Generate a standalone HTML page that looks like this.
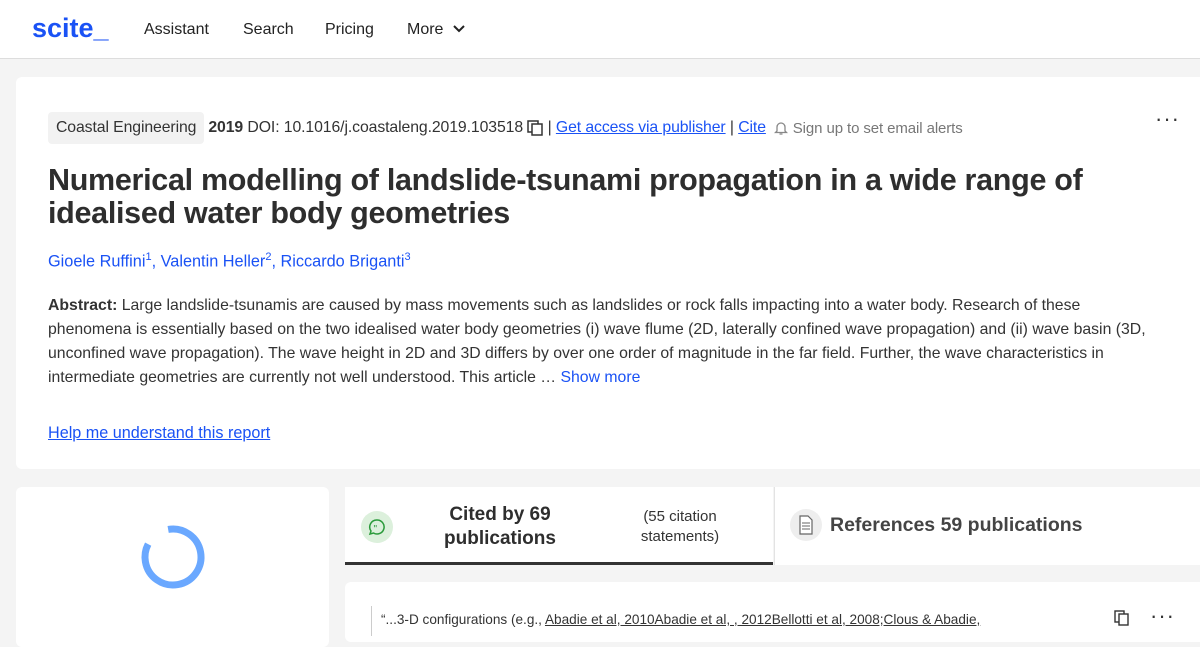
<!DOCTYPE html>
<html><head><style>
*{margin:0;padding:0;box-sizing:border-box}
body{width:1200px;height:630px;overflow:hidden;background:#f4f4f4;font-family:"Liberation Sans",sans-serif;color:#333;position:relative}
.nav{position:absolute;left:0;top:0;width:1200px;height:59px;background:#fff;border-bottom:1px solid #ddd}
.logo{position:absolute;left:32px;top:13px;font-size:27px;font-weight:bold;color:#1a52f5;letter-spacing:0px}
.nl{position:absolute;top:21px;font-size:16px;color:#222}
.card{position:absolute;background:#fff;border-radius:6px}
a{color:#1a52f5}
.meta{position:absolute;left:48px;top:112px;font-size:15.8px;color:#333;display:flex;align-items:center;white-space:nowrap;letter-spacing:-0.1px}
.tag{background:#f2f2f2;border-radius:4px;padding:7px 8px;margin-right:4px}
h1{position:absolute;left:48px;top:164px;width:1120px;font-size:30.5px;line-height:33px;font-weight:bold;color:#2e2e2e;letter-spacing:-0.3px}
.auth{position:absolute;left:48px;top:251px;font-size:16.3px;color:#1a52f5}
.auth sup{font-size:11px}
.abs{position:absolute;left:48px;top:294px;width:1150px;font-size:15.8px;line-height:24px;color:#333;white-space:nowrap}
</style></head><body>
<div class="nav">
<div class="logo">scite_</div>
<div class="nl" style="left:144px">Assistant</div>
<div class="nl" style="left:243px">Search</div>
<div class="nl" style="left:325px">Pricing</div>
<div class="nl" style="left:407px">More <svg width="14" height="10" viewBox="0 0 14 10" style="margin-left:4px"><path d="M2 2l5 5 5-5" stroke="#222" stroke-width="2" fill="none"/></svg></div>
</div>
<div class="card" style="left:16px;top:77px;width:1200px;height:392px">
</div>
<div class="meta"><span class="tag">Coastal Engineering</span><b>2019</b>&nbsp;DOI: 10.1016/j.coastaleng.2019.103518&nbsp;<svg width="16" height="16" viewBox="0 0 16 16"><rect x="1" y="1" width="10" height="11" fill="none" stroke="#333" stroke-width="1.5"/><rect x="5" y="4" width="10" height="11" fill="#fff" stroke="#333" stroke-width="1.5"/></svg>&nbsp;|&nbsp;<a href="#">Get access via publisher</a>&nbsp;|&nbsp;<a href="#">Cite</a>&nbsp;&nbsp;<svg width="14" height="16" viewBox="0 0 14 16"><path d="M3 11V7a4 4 0 018 0v4l1.5 1.5h-11z M5.5 14h3" stroke="#888" fill="none" stroke-width="1.3"/></svg>&nbsp;<span style="color:#777;font-size:15px">Sign up to set email alerts</span></div>
<div style="position:absolute;left:1155px;top:106px;font-size:22px;color:#333;letter-spacing:1px">···</div>
<h1>Numerical modelling of landslide-tsunami propagation in a wide range of idealised water body geometries</h1>
<div class="auth">Gioele Ruffini<sup>1</sup>, Valentin Heller<sup>2</sup>, Riccardo Briganti<sup>3</sup></div>
<div class="abs"><b>Abstract:</b> Large landslide-tsunamis are caused by mass movements such as landslides or rock falls impacting into a water body. Research of these<br>phenomena is essentially based on the two idealised water body geometries (i) wave flume (2D, laterally confined wave propagation) and (ii) wave basin (3D,<br>unconfined wave propagation). The wave height in 2D and 3D differs by over one order of magnitude in the far field. Further, the wave characteristics in<br>intermediate geometries are currently not well understood. This article … <span style="color:#1a52f5">Show more</span></div>
<a href="#" style="position:absolute;left:48px;top:424px;font-size:16.2px">Help me understand this report</a>
<div class="card" style="left:16px;top:487px;width:313px;height:160px"></div>
<svg style="position:absolute;left:139px;top:523px" width="68" height="68" viewBox="0 0 68 68"><circle cx="34" cy="34" r="28" fill="none" stroke="#6aa8ff" stroke-width="7" stroke-dasharray="150 30" transform="rotate(-100 34 34)"/></svg>
<div style="position:absolute;left:345px;top:487px;width:428px;height:78px;background:#fff;border-bottom:3px solid #333"></div>
<div style="position:absolute;left:774px;top:487px;width:440px;height:78px;background:#fff;border-left:1px solid #e3e3e3"></div>
<div style="position:absolute;left:361px;top:511px;width:32px;height:32px;border-radius:50%;background:#dcf0dc"></div>
<svg style="position:absolute;left:367px;top:517px" width="20" height="20" viewBox="0 0 20 20"><path d="M10 3a7 7 0 11-3.5 13L3 17l1-3A7 7 0 0110 3z" fill="none" stroke="#2a9a3a" stroke-width="1.5"/><text x="6.5" y="15" font-size="10" fill="#2a9a3a" font-family="Liberation Sans">"</text></svg>
<div style="position:absolute;left:420px;top:503px;width:160px;text-align:center;font-size:19px;font-weight:bold;line-height:24px;color:#2e2e2e">Cited by 69 publications</div>
<div style="position:absolute;left:620px;top:507px;width:120px;text-align:center;font-size:15px;line-height:20px;color:#333">(55 citation statements)</div>
<div style="position:absolute;left:790px;top:509px;width:32px;height:32px;border-radius:50%;background:#eee"></div>
<svg style="position:absolute;left:798px;top:515px" width="16" height="20" viewBox="0 0 16 20"><path d="M2 1h8l4 4v14H2z" fill="#fff" stroke="#666" stroke-width="1.2"/><path d="M4 8h8M4 11h8M4 14h8" stroke="#666"/></svg>
<div style="position:absolute;left:830px;top:514px;font-size:19.5px;font-weight:bold;color:#444">References 59 publications</div>
<div class="card" style="left:345px;top:582px;width:870px;height:60px"></div>
<div style="position:absolute;left:371px;top:606px;width:1px;height:30px;background:#ccc"></div>
<div style="position:absolute;left:381px;top:612px;font-size:13.6px;color:#333">“...3-D configurations (e.g., <u>Abadie et al, 2010Abadie et al, , 2012Bellotti et al, 2008;Clous &amp; Abadie,</u></div>
<svg style="position:absolute;left:1114px;top:610px" width="16" height="16" viewBox="0 0 16 16"><rect x="1" y="1" width="9" height="11" fill="none" stroke="#333" stroke-width="1.4"/><rect x="5" y="4" width="9" height="11" fill="#fff" stroke="#333" stroke-width="1.4"/></svg>
<div style="position:absolute;left:1150px;top:603px;font-size:22px;color:#333;letter-spacing:1px">···</div>
</body></html>
